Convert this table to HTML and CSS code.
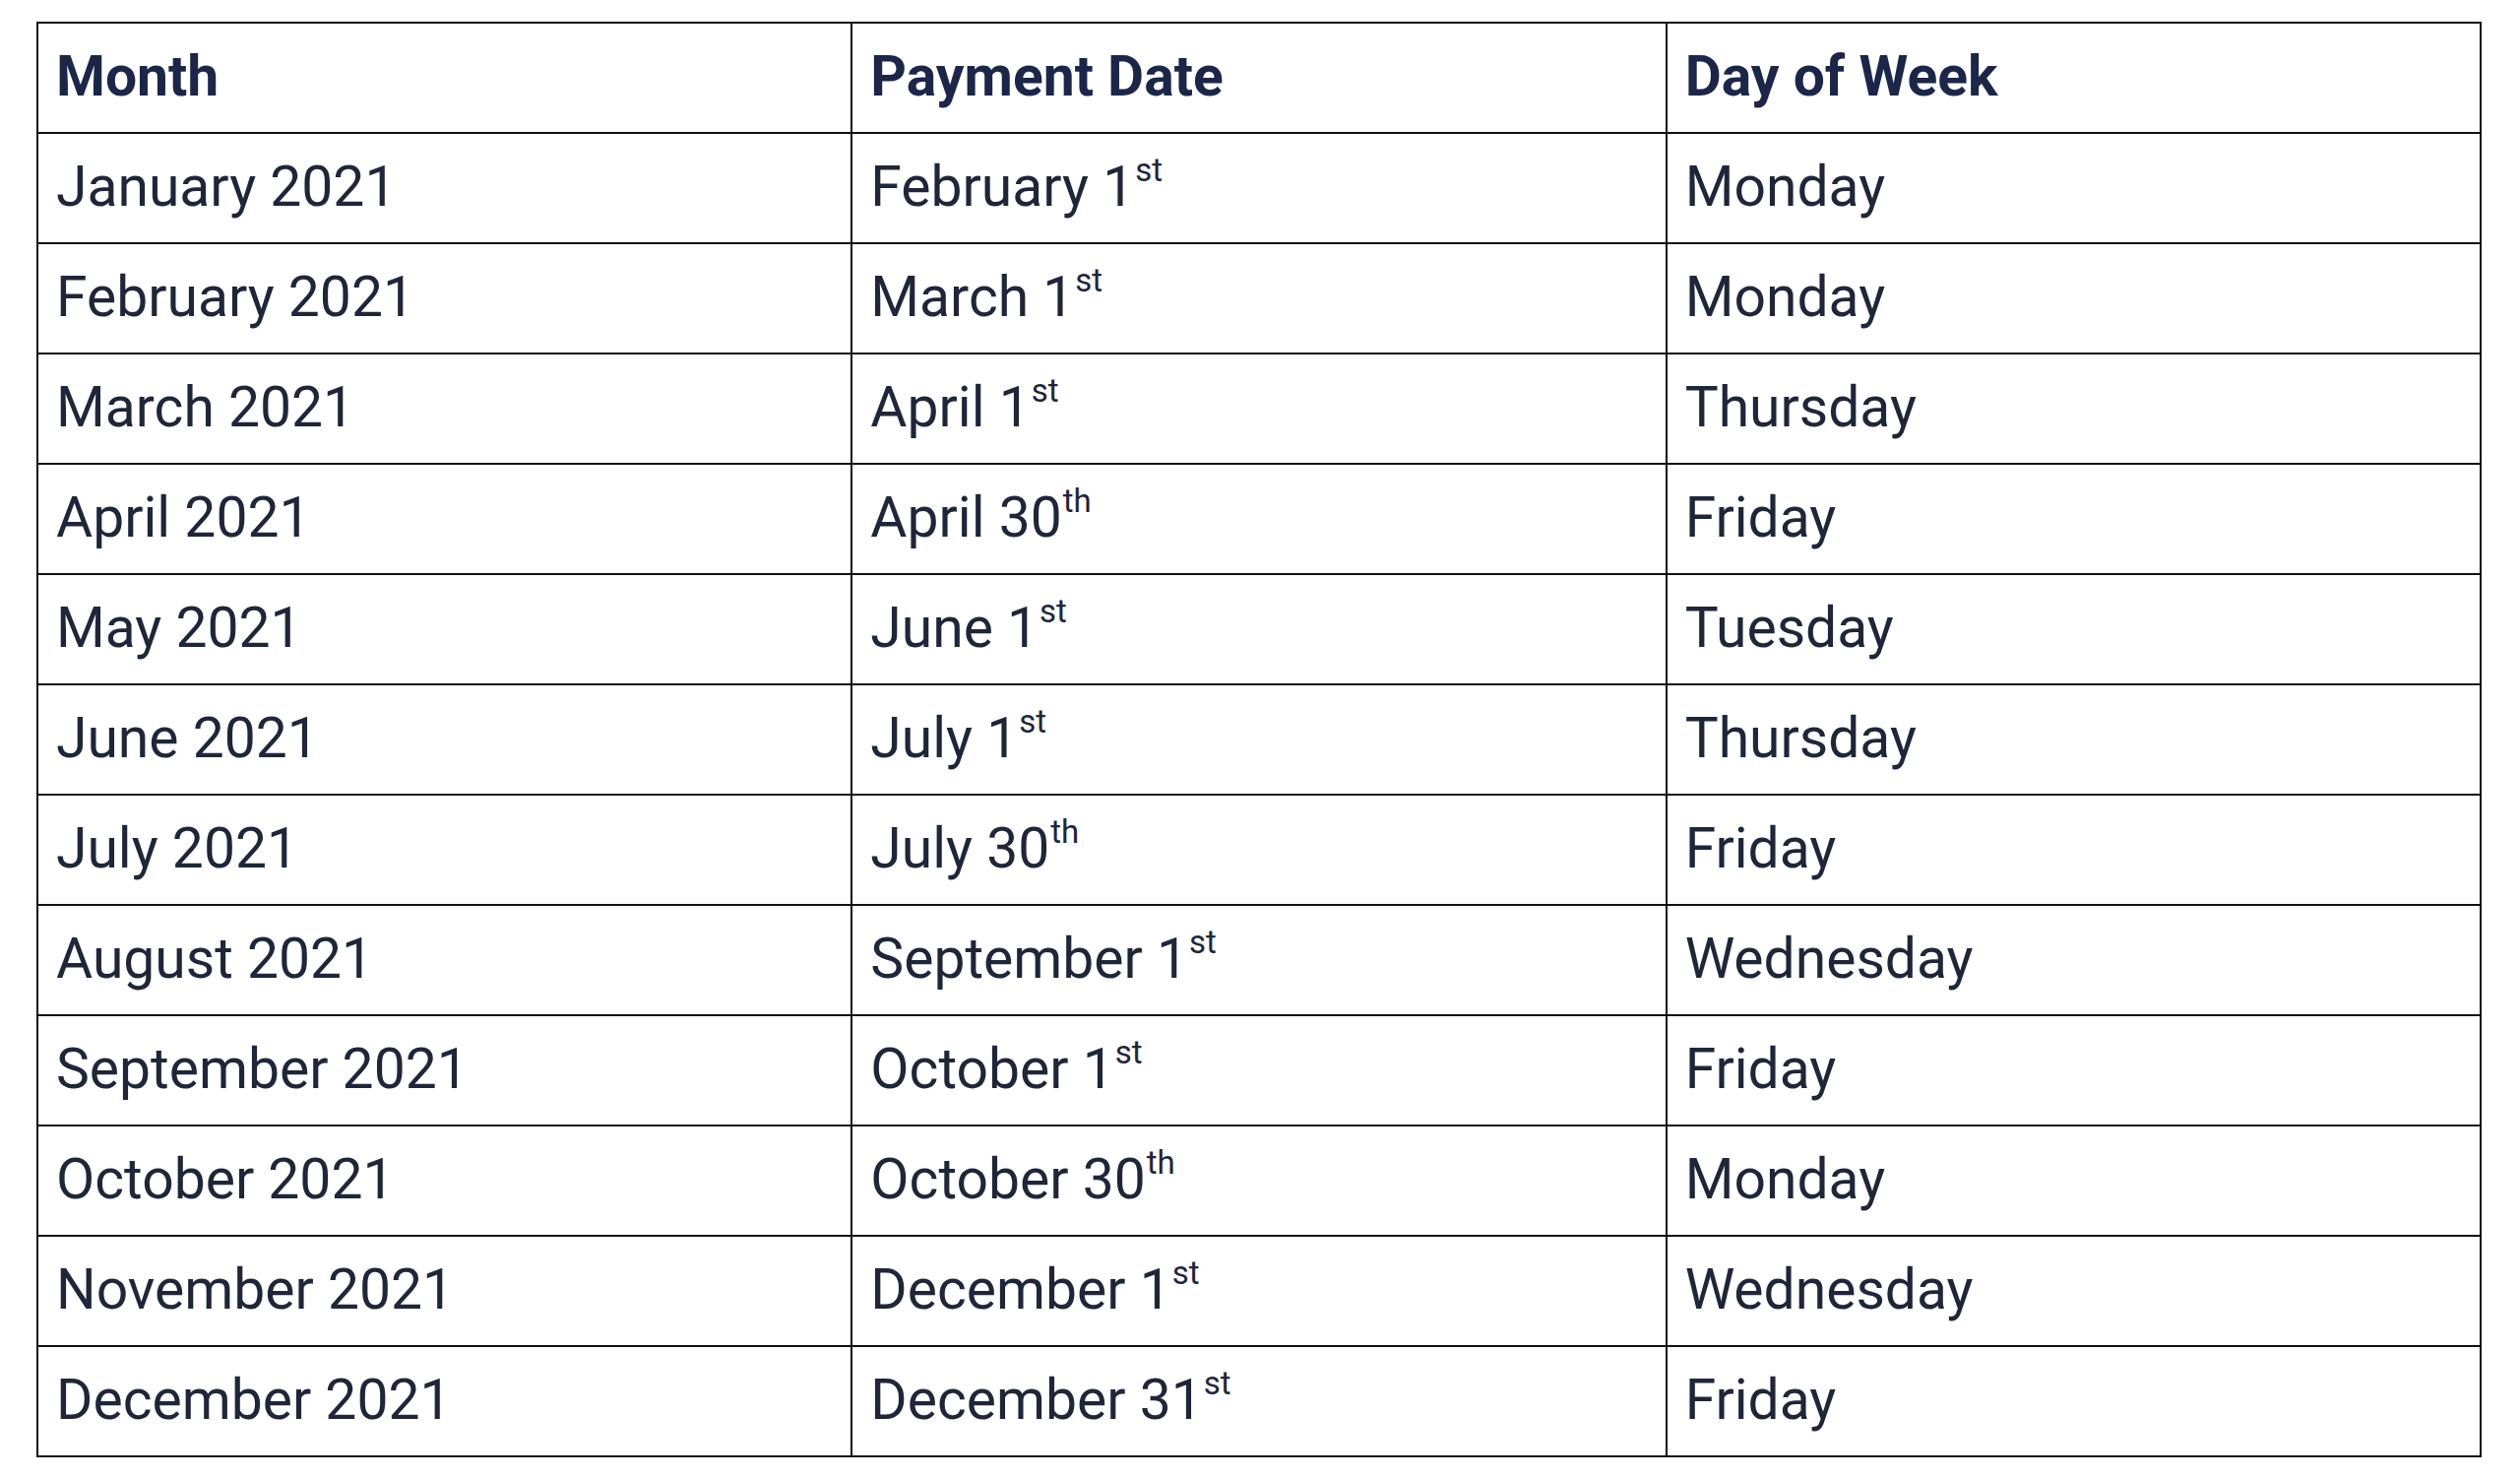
FILE: index.html
```html
<!DOCTYPE html>
<html lang="en">
<head>
<meta charset="utf-8">
<title>Payment Dates 2021</title>
<link rel="stylesheet" href="styles.css">
</head>
<body>
<table class="schedule">
  <thead>
    <tr><th>Month</th><th>Payment Date</th><th>Day of Week</th></tr>
  </thead>
  <tbody>
    <tr><td>January 2021</td><td>February 1<sup>st</sup></td><td>Monday</td></tr>
    <tr><td>February 2021</td><td>March 1<sup>st</sup></td><td>Monday</td></tr>
    <tr><td>March 2021</td><td>April 1<sup>st</sup></td><td>Thursday</td></tr>
    <tr><td>April 2021</td><td>April 30<sup>th</sup></td><td>Friday</td></tr>
    <tr><td>May 2021</td><td>June 1<sup>st</sup></td><td>Tuesday</td></tr>
    <tr><td>June 2021</td><td>July 1<sup>st</sup></td><td>Thursday</td></tr>
    <tr><td>July 2021</td><td>July 30<sup>th</sup></td><td>Friday</td></tr>
    <tr><td>August 2021</td><td>September 1<sup>st</sup></td><td>Wednesday</td></tr>
    <tr><td>September 2021</td><td>October 1<sup>st</sup></td><td>Friday</td></tr>
    <tr><td>October 2021</td><td>October 30<sup>th</sup></td><td>Monday</td></tr>
    <tr><td>November 2021</td><td>December 1<sup>st</sup></td><td>Wednesday</td></tr>
    <tr><td>December 2021</td><td>December 31<sup>st</sup></td><td>Friday</td></tr>
  </tbody>
</table>
</body>
</html>
```
FILE: styles.css
```css
html, body {
  background: #ffffff;
}
body {
  margin: 0;
  padding: 22px 0 0 37px;
  font-family: Roboto, "Liberation Sans", Arial, sans-serif;
}
.schedule {
  width: 2484px;
  border-collapse: collapse;
  table-layout: fixed;
  border: 2px solid #111111;
}
.schedule th,
.schedule td {
  height: 106px;
  padding: 0 0 4px 18px;
  border: 2px solid #111111;
  text-align: left;
  vertical-align: middle;
  font-size: 57px;
  line-height: 1;
  white-space: nowrap;
}
.schedule th {
  font-weight: 700;
  color: #1b2649;
}
.schedule td {
  font-weight: 400;
  color: #1f2639;
}
.schedule sup {
  font-size: 33px;
  line-height: 0;
  vertical-align: 25px;
  margin-left: 1px;
}
```
